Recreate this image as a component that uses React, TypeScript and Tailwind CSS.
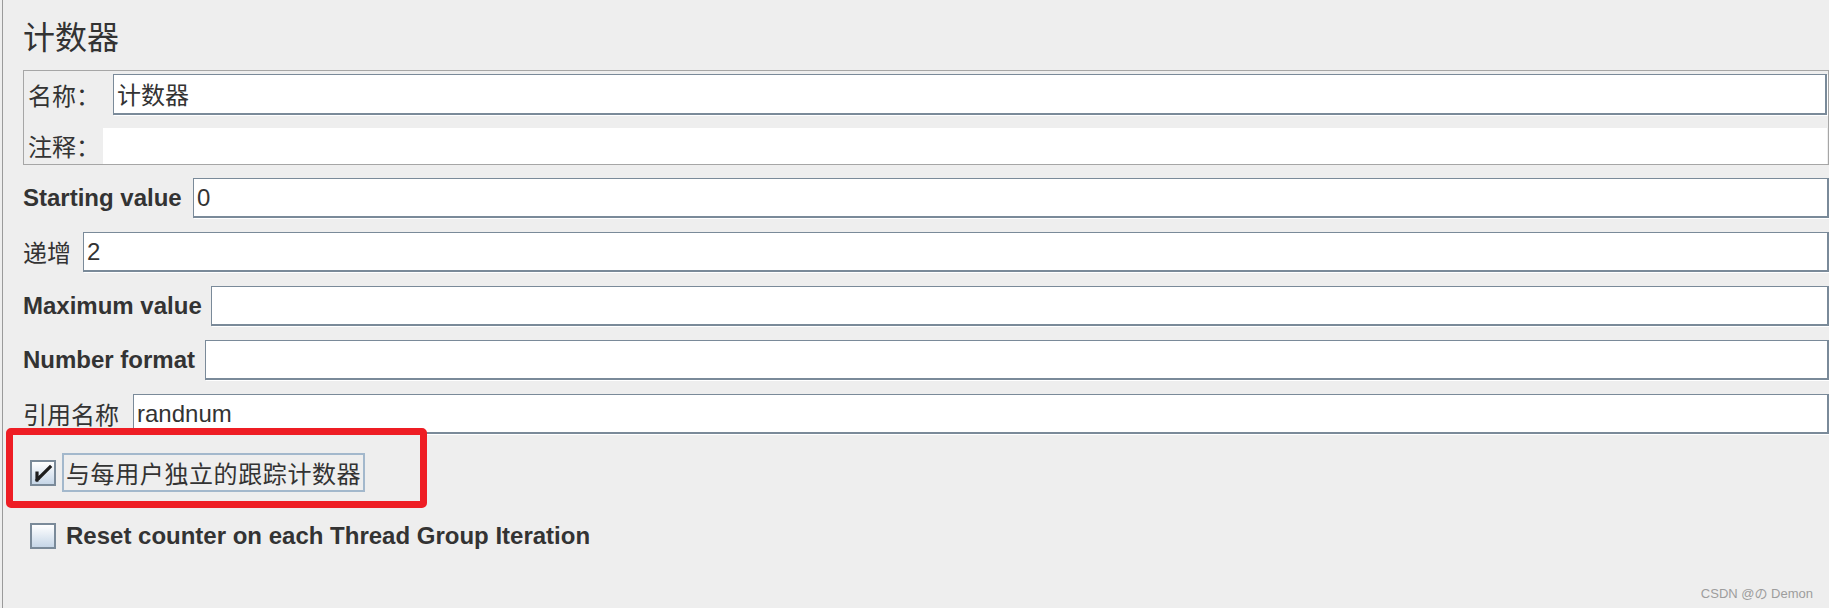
import React from "react";

const cjk = { fontFamily: '"Noto Sans CJK SC", "Liberation Sans", sans-serif' };
const latin = { fontFamily: '"Liberation Sans", "Noto Sans CJK SC", sans-serif' };

function Field({ value, cjkValue }: { value?: string; cjkValue?: boolean }) {
  return (
    <div
      className="flex-1 h-full flex items-center bg-white border-t border-l border-b-2 border-r-2 border-[#7a8a99] shadow-[1px_1px_0_#ffffff] pl-[3px] text-[24px] text-[#333333]"
      style={cjkValue ? cjk : latin}
    >
      {value}
    </div>
  );
}

function Row({
  label,
  width,
  bold,
  value,
}: {
  label: string;
  width: number;
  bold?: boolean;
  value?: string;
}) {
  return (
    <div className="flex items-center h-[40px]">
      <div
        className={`shrink-0 text-[24px] text-[#333333] ${bold ? "font-bold" : ""}`}
        style={{ ...(bold ? latin : cjk), width }}
      >
        {label}
      </div>
      <Field value={value} />
    </div>
  );
}

function CheckBox({ checked }: { checked?: boolean }) {
  return (
    <div className="w-[26px] h-[26px] shrink-0 border-2 border-[#7a8a99] bg-gradient-to-b from-white to-[#c6d6e7] flex items-center justify-center">
      {checked && (
        <svg width="22" height="22" viewBox="0 0 22 22">
          <path d="M5 11 L5 18 M5 18 L18 5" stroke="#1e1e1e" strokeWidth="3.2" fill="none" strokeLinecap="square" />
          <path d="M3.5 17.5 L8 17.5 L8 13 Z" fill="#1e1e1e" />
        </svg>
      )}
    </div>
  );
}

export default function App() {
  return (
    <div className="relative w-[1829px] h-[608px] overflow-hidden bg-[#eeeeee]">
      <div className="ml-[2px] h-full border-l border-[#9a9a9a] pl-[20px] flex flex-col">
        {/* Title */}
        <div className="mt-[19px] h-[32px] leading-[32px] text-[32px] text-[#333333]" style={cjk}>
          计数器
        </div>

        {/* Name / comment group */}
        <div className="mt-[19px] border border-[#a6a6a6] pl-[4px] pr-[1px] pt-[3px] flex flex-col">
          <div className="flex items-center h-[41px]">
            <div className="w-[85px] shrink-0 text-[24px] text-[#333333]" style={cjk}>
              名称：
            </div>
            <Field value="计数器" cjkValue />
          </div>
          <div className="flex items-center h-[36px] mt-[13px]">
            <div className="w-[75px] shrink-0 text-[24px] text-[#333333]" style={cjk}>
              注释：
            </div>
            <div className="flex-1 h-full bg-white" />
          </div>
        </div>

        {/* Counter fields */}
        <div className="mt-[13px] flex flex-col gap-[14px]">
          <Row label="Starting value" width={170} bold value="0" />
          <Row label="递增" width={60} value="2" />
          <Row label="Maximum value" width={188} bold />
          <Row label="Number format" width={182} bold />
          <Row label="引用名称" width={110} value="randnum" />
        </div>

        {/* Checkboxes */}
        <div className="mt-[19px] h-[39px] flex items-center pl-[7px]">
          <CheckBox checked />
          <div
            className="ml-[6px] h-[39px] flex items-center border-2 border-[#a3b8cc] px-[2px] text-[24px] tracking-[0.6px] text-[#333333]"
            style={cjk}
          >
            与每用户独立的跟踪计数器
          </div>
        </div>
        <div className="mt-[24px] h-[39px] flex items-center pl-[7px]">
          <CheckBox />
          <div className="ml-[6px] h-[39px] flex items-center border-2 border-transparent px-[2px] text-[24px] font-bold text-[#333333]" style={latin}>
            Reset counter on each Thread Group Iteration
          </div>
        </div>
      </div>

      {/* Annotation */}
      <div className="absolute left-[6px] top-[428px] w-[421px] h-[80px] border-[7px] border-[#ee1d24] rounded-[5px]" />

      {/* Watermark */}
      <div
        className="absolute right-[16px] top-[584px] text-[13px] text-[#9d9d9d]"
        style={{ fontFamily: '"Liberation Sans", "Noto Sans CJK JP", sans-serif' }}
      >
        CSDN @の Demon
      </div>
    </div>
  );
}
